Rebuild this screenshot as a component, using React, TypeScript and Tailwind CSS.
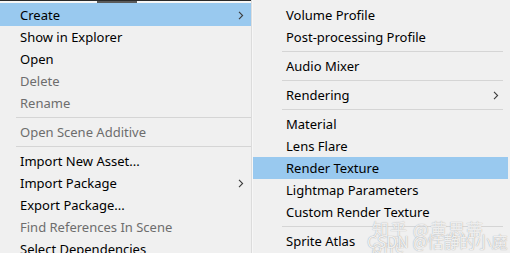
import React from "react";

type Entry =
  | { sep: true }
  | { label: string; disabled?: boolean; sub?: boolean; active?: boolean };

const leftMenu: Entry[] = [
  { label: "Create", sub: true, active: true },
  { label: "Show in Explorer" },
  { label: "Open" },
  { label: "Delete", disabled: true },
  { label: "Rename", disabled: true },
  { sep: true },
  { label: "Open Scene Additive", disabled: true },
  { sep: true },
  { label: "Import New Asset..." },
  { label: "Import Package", sub: true },
  { label: "Export Package..." },
  { label: "Find References In Scene", disabled: true },
  { label: "Select Dependencies" },
];

const rightMenu: Entry[] = [
  { label: "Volume Profile" },
  { label: "Post-processing Profile" },
  { sep: true },
  { label: "Audio Mixer" },
  { sep: true },
  { label: "Rendering", sub: true },
  { sep: true },
  { label: "Material" },
  { label: "Lens Flare" },
  { label: "Render Texture", active: true },
  { label: "Lightmap Parameters" },
  { label: "Custom Render Texture" },
  { sep: true },
  { label: "Sprite Atlas" },
];

function Chevron() {
  return (
    <svg width="6" height="9" viewBox="0 0 6 9" className="shrink-0">
      <path d="M1 0.8 L4.6 4.5 L1 8.2" fill="none" stroke="#3c3c3c" strokeWidth="1.1" />
    </svg>
  );
}

function Menu({ items, textLeft, sepLeft, arrowRight }: { items: Entry[]; textLeft: string; sepLeft: string; arrowRight: string }) {
  return (
    <div className="flex flex-col shrink-0">
      {items.map((it, i) =>
        "sep" in it ? (
          <div key={i} className={`h-[7px] shrink-0 flex items-center ${sepLeft}`}>
            <div className="h-px flex-1 bg-[#d5d5d5]" />
          </div>
        ) : (
          <div
            key={i}
            className={`h-[22px] shrink-0 flex items-center justify-between ${textLeft} ${arrowRight} ${
              it.active ? "bg-[#99c9ef]" : ""
            } ${it.disabled ? "text-[#6d6d6d]" : "text-black"}`}
          >
            <span className="whitespace-nowrap">{it.label}</span>
            {it.sub && <Chevron />}
          </div>
        )
      )}
    </div>
  );
}

export default function App() {
  return (
    <div
      className="relative w-[510px] h-[253px] overflow-hidden bg-[#f0f0f0] flex items-start text-[13px] leading-none"
      style={{ fontFamily: '"Noto Sans", "Open Sans", sans-serif' }}
    >
      {/* left context menu */}
      <div className="w-[251px] shrink-0 flex flex-col">
        <div className="h-[3px] shrink-0 flex flex-col">
          <div className="h-px bg-[#2a2a2a]" />
          <div className="flex-1 flex bg-[#f6f6f6]">
            <div className="w-[97px]" />
            <div className="w-[40px] bg-[#5a5a5a]" />
          </div>
        </div>
        <div className="h-px shrink-0 bg-[#99c9ef]" />
        <Menu items={leftMenu} textLeft="pl-[20px]" sepLeft="pl-[16px]" arrowRight="pr-[7px]" />
      </div>
      <div className="w-px self-stretch bg-[#dcdcdc]" />
      <div className="w-px self-stretch bg-[#f7f7f7]" />

      {/* create submenu */}
      <div className="flex-1 pt-[4px] pr-[2px]">
        <Menu items={rightMenu} textLeft="pl-[33px]" sepLeft="pl-[29px] pr-[5px]" arrowRight="pr-[9px]" />
      </div>

      {/* watermark */}
      <div
        className="absolute left-[372px] top-[220px] text-[17px] text-white/80 tracking-[1px] [text-shadow:0_0_1px_#9a9a9a]"
        style={{ fontFamily: '"Noto Sans CJK SC", sans-serif' }}
      >
        知乎 @黄思蒂one
      </div>
      <div
        className="absolute left-[367px] top-[233px] text-[16px] text-white/85 [text-shadow:0_0_1px_#8a8a8a]"
        style={{ fontFamily: '"Noto Sans CJK SC", sans-serif' }}
      >
        CSDN @恬静的小魔龙
      </div>
    </div>
  );
}
